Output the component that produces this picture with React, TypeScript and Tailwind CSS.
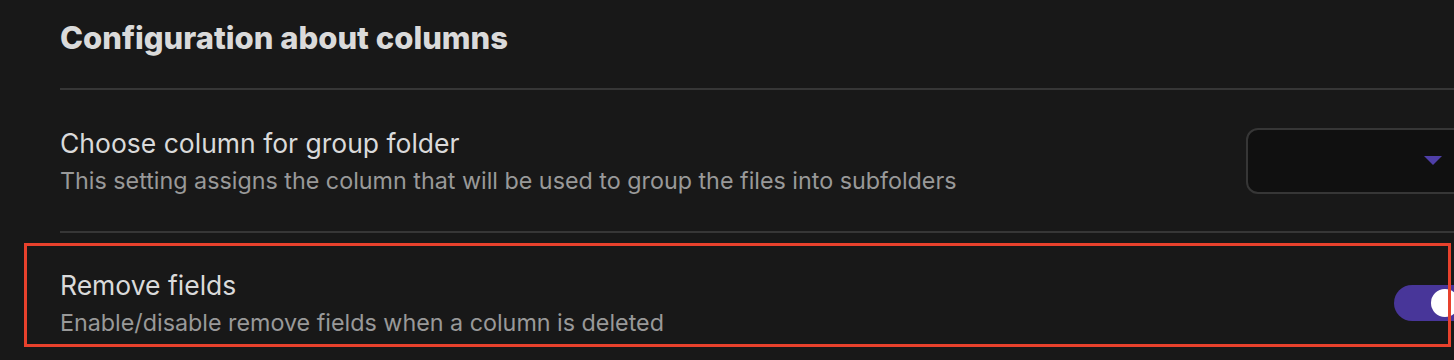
export default function App() {
  return (
    <div className="relative w-[1454px] h-[360px] overflow-hidden bg-[#181818] font-['Inter',sans-serif]">
      <div className="pl-[60px]">
        <div className="h-[90px] border-b-2 border-[#363636] pt-[18px]">
          <h2 className="text-[31px] font-extrabold leading-[40px] text-[#dadada]">Configuration about columns</h2>
        </div>
        <div className="flex h-[143px] items-center justify-between border-b-2 border-[#363636]">
          <div className="flex flex-col gap-[8px]">
            <div className="text-[26.5px] leading-[32px] text-[#dadada]">Choose column for group folder</div>
            <div className="text-[23.3px] leading-[28px] text-[#999999]">This setting assigns the column that will be used to group the files into subfolders</div>
          </div>
          <div className="mr-[-20px] flex h-[66px] w-[228px] items-center justify-end rounded-[12px] border-2 border-[#363636] bg-[#101010] pr-[30px]">
            <svg width="18" height="10" viewBox="0 0 18 10"><path d="M0 0 L18 0 L9 9 Z" fill="#4f3fa8" /></svg>
          </div>
        </div>
        <div className="flex h-[140px] items-center justify-between">
          <div className="flex flex-col gap-[8px]">
            <div className="text-[26.5px] leading-[32px] text-[#dadada]">Remove fields</div>
            <div className="text-[23.3px] leading-[28px] text-[#999999]">Enable/disable remove fields when a column is deleted</div>
          </div>
          <div className="mr-[-40px] flex h-[36px] w-[100px] items-center rounded-full bg-[#483699] pl-[37px]">
            <div className="h-[28px] w-[28px] rounded-full bg-white" />
          </div>
        </div>
      </div>
      <div className="absolute left-[24px] top-[243px] h-[104px] w-[1427px] border-[3px] border-[#e8412c]" />
    </div>
  );
}
